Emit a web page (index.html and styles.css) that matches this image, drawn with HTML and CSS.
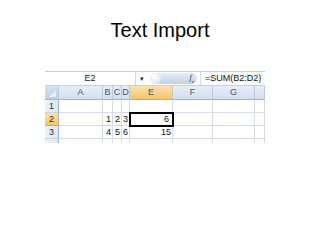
FILE: index.html
```html
<!DOCTYPE html>
<html lang="en">
<head>
  <meta charset="UTF-8">
  <title>Text Import</title>
  <link rel="stylesheet" href="styles.css">
</head>
<body>
  <!-- Title -->
  <h1 class="title">Text Import</h1>

  <!-- Spreadsheet -->
  <div class="sheet">
    <div class="formula-bar">
      <div class="name-box">E2</div>
      <div class="drop">&#9662;</div>
      <div class="pill">
        <span class="knob"></span>
        <span class="fx">f<sub>x</sub></span>
      </div>
      <div class="formula">=SUM(B2:D2)</div>
    </div>

    <div class="grid">
      <div class="hd corner"><span class="tri"></span></div>
      <div class="hd">A</div>
      <div class="hd">B</div>
      <div class="hd">C</div>
      <div class="hd">D</div>
      <div class="hd sel">E</div>
      <div class="hd">F</div>
      <div class="hd">G</div>
      <div class="hd"></div>

      <div class="rh">1</div>
      <div class="c"></div><div class="c"></div><div class="c"></div><div class="c"></div>
      <div class="c"></div><div class="c"></div><div class="c"></div><div class="c"></div>

      <div class="rh sel">2</div>
      <div class="c"></div><div class="c num">1</div><div class="c num">2</div><div class="c num">3</div>
      <div class="c num active">6</div><div class="c"></div><div class="c"></div><div class="c"></div>

      <div class="rh">3</div>
      <div class="c"></div><div class="c num">4</div><div class="c num">5</div><div class="c num">6</div>
      <div class="c num">15</div><div class="c"></div><div class="c"></div><div class="c"></div>

      <div class="rh"></div>
      <div class="c"></div><div class="c"></div><div class="c"></div><div class="c"></div>
      <div class="c"></div><div class="c"></div><div class="c"></div><div class="c"></div>
    </div>
  </div>
</body>
</html>
```

FILE: styles.css
```css
/* General */
body {
  margin: 0;
  background: #fff;
  font-family: "Liberation Sans", Arial, sans-serif;
  color: #000;
}

.title {
  margin: 0;
  padding-top: 18px;
  font-size: 20px;
  font-weight: normal;
  line-height: 24px;
  text-align: center;
}

/* Sheet */
.sheet {
  width: 220px;
  height: 72px;
  margin: 29px 0 0 45px;
  overflow: hidden;
  font-size: 9px;
  color: #222;
}

.formula-bar {
  display: flex;
  align-items: center;
  height: 15px;
  background: #fff;
  border-top: 1px solid #c5cdd8;
  border-bottom: 1px solid #c5d0de;
  box-sizing: border-box;
}

.name-box {
  width: 91px;
  height: 13px;
  line-height: 13px;
  text-align: center;
  background: #fff;
  border-right: 1px solid #d3dae4;
  box-sizing: border-box;
}

.drop {
  width: 12px;
  text-align: center;
  font-size: 7px;
  color: #222;
}

.pill {
  position: relative;
  display: flex;
  align-items: center;
  justify-content: flex-end;
  width: 47px;
  height: 11px;
  margin-left: 2px;
  padding-right: 3px;
  border-radius: 6px;
  background: linear-gradient(#e4ecf6, #c3d1e4);
  box-sizing: border-box;
}

.knob {
  position: absolute;
  left: 0;
  top: 0;
  width: 11px;
  height: 11px;
  border-radius: 50%;
  background: radial-gradient(circle at 40% 35%, #fff, #d6e0ee);
}

.fx {
  font-family: "Liberation Serif", serif;
  font-style: italic;
  font-size: 8px;
  color: #333;
}

.fx sub {
  font-size: 5px;
}

.formula {
  flex: 1;
  height: 13px;
  line-height: 13px;
  margin-left: 3px;
  padding-left: 4px;
  background: #fff;
  border-left: 1px solid #d3dae4;
  color: #111;
}

.grid {
  display: grid;
  grid-template-columns: 14px 44px 10px 9px 8px 43px 40px 42px 10px;
  grid-template-rows: 14px;
  grid-auto-rows: 13px;
}

.grid > div {
  box-sizing: border-box;
  border-right: 1px solid #d5dce8;
  border-bottom: 1px solid #d5dce8;
}

.hd {
  text-align: center;
  line-height: 13px;
  color: #4a5568;
  background: linear-gradient(#e6eef8, #d3dfee);
  border-right-color: #b9c8db !important;
  border-bottom-color: #9eb6ce !important;
}

.corner {
  position: relative;
  background: linear-gradient(#d3e0f0, #bfd0e7);
}

.tri {
  position: absolute;
  right: 2px;
  bottom: 2px;
  width: 0;
  height: 0;
  border-left: 7px solid transparent;
  border-bottom: 7px solid #e8eef7;
}

.hd.sel,
.rh.sel {
  background: linear-gradient(#fbe2b0, #f6c46a);
  border-bottom-color: #e6a73e !important;
}

.rh {
  text-align: center;
  line-height: 12px;
  color: #333;
  background: linear-gradient(90deg, #eef3fa, #dde6f2);
  border-right-color: #9eb6ce !important;
  border-bottom-color: #c5d3e3 !important;
}

.c {
  background: #fff;
}

.num {
  text-align: right;
  padding-right: 1px;
  line-height: 12px;
  color: #111;
}

.active {
  position: relative;
  outline: 2px solid #000;
  outline-offset: -1px;
  padding-right: 3px;
}
```
